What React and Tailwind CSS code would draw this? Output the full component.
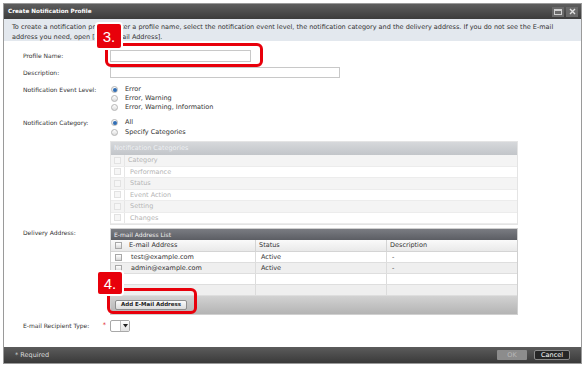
import React from 'react'

function Radio({ checked }) {
  return (
    <span className="relative inline-flex items-center justify-center w-[7px] h-[7px] rounded-full border border-[#b5b5b5] bg-gradient-to-b from-white to-[#dcdcdc] shrink-0">
      {checked && <span className="w-[4px] h-[4px] rounded-full bg-[#2f6db5]" />}
    </span>
  )
}

function Check({ faded }) {
  return (
    <span className={`inline-block w-[7px] h-[7px] border shrink-0 ${faded ? 'border-[#e2e2e2] bg-[#f6f6f6]' : 'border-[#a8a8a8] bg-gradient-to-b from-white to-[#d8d8d8]'}`} />
  )
}

function Label({ children, className = '' }) {
  return <div className={`w-[87px] shrink-0 text-[#333] text-[6px] ${className}`}>{children}</div>
}

const categories = ['Performance', 'Status', 'Event Action', 'Setting', 'Changes']

const emails = [
  { addr: 'test@example.com', status: 'Active', desc: '-' },
  { addr: 'admin@example.com', status: 'Active', desc: '-' },
  { addr: '', status: '', desc: '' },
  { addr: '', status: '', desc: '' },
]

export default function App() {
  return (
    <div className="w-[585px] h-[367px] bg-white p-[3px] relative font-['DejaVu_Sans',sans-serif] text-[6.5px] leading-none">
      <div className="h-full flex flex-col border border-[#9a9a9a]">
        {/* title bar */}
        <div className="h-[15px] shrink-0 flex items-center justify-between pl-[4px] pr-[3px] bg-gradient-to-b from-[#5e5e5e] to-[#3c3c3c]">
          <span className="text-white font-bold text-[5.7px]">Create Notification Profile</span>
          <div className="flex gap-[2px]">
            <span className="w-[12px] h-[10px] bg-[#6a6a6a] flex items-center justify-center">
              <span className="w-[8px] h-[6px] border border-[#cfcfcf] border-t-2" />
            </span>
            <span className="w-[12px] h-[10px] bg-[#6a6a6a] flex items-center justify-center">
              <svg width="7" height="7" viewBox="0 0 7 7">
                <path d="M1 1L6 6M6 1L1 6" stroke="#e0e0e0" strokeWidth="1.4" />
              </svg>
            </span>
          </div>
        </div>

        {/* info bar */}
        <div className="h-[22px] shrink-0 bg-[#e3e8ee] pl-[8px] pt-[3px] text-[#333] whitespace-nowrap leading-[10px]">
          To create a notification profile, enter a profile name, select the notification event level, the notification category and the delivery address. If you do not see the E-mail
          <br />
          address you need, open [Add E-mail Address].
        </div>

        {/* body */}
        <div className="flex-1 pl-[19px] pt-[9px]">
          <div className="flex items-center h-[12px]">
            <Label>Profile Name:</Label>
            <div className="w-[141px] h-[12px] border border-[#c8c8c8] bg-white" />
          </div>

          <div className="flex items-center h-[11px] mt-[5px]">
            <Label>Description:</Label>
            <div className="w-[230px] h-[11px] border border-[#c8c8c8] bg-white" />
          </div>

          <div className="flex mt-[7px]">
            <Label className="pt-[2px]">Notification Event Level:</Label>
            <div className="flex flex-col pl-[1px]">
              {['Error', 'Error, Warning', 'Error, Warning, Information'].map((t, i) => (
                <div key={t} className="flex items-center gap-[7px] h-[9px] text-[#333]">
                  <Radio checked={i === 0} />
                  <span>{t}</span>
                </div>
              ))}
            </div>
          </div>

          <div className="flex mt-[6px]">
            <Label className="pt-[2px]">Notification Category:</Label>
            <div className="flex flex-col pl-[1px]">
              <div className="flex items-center gap-[7px] h-[9px] text-[#333]">
                <Radio checked />
                <span>All</span>
              </div>
              <div className="flex items-center gap-[7px] h-[10px] text-[#333]">
                <Radio />
                <span>Specify Categories</span>
              </div>
            </div>
          </div>

          {/* categories panel */}
          <div className="flex mt-[4px]">
            <Label />
            <div className="w-[408px] border border-[#e4e4e4]">
              <div className="h-[13px] flex items-center pl-[3px] bg-gradient-to-b from-[#d6d8db] to-[#c2c5c9] text-[#eef0f3]">
                Notification Categories
              </div>
              {['Category', ...categories].map((c, i) => (
                <div key={c} className={`h-[11.5px] flex border-b border-[#ececec] text-[#b4b4b4] ${i % 2 === 0 ? 'bg-[#f4f4f4]' : 'bg-white'}`}>
                  <div className="w-[14px] flex items-center justify-center border-r border-[#e6e6e6]">
                    <Check faded />
                  </div>
                  <div className={`flex items-center ${i === 0 ? 'pl-[3px]' : 'pl-[5px]'}`}>{c}</div>
                </div>
              ))}
            </div>
          </div>

          {/* email list */}
          <div className="flex mt-[3px]">
            <Label className="pt-[2px]">Delivery Address:</Label>
            <div className="w-[408px] border border-[#d0d0d0]">
              <div className="h-[11px] flex items-center pl-[3px] bg-gradient-to-b from-[#7a7c82] to-[#5c5e64] text-[#f2f2f2] text-[6px]">
                E-mail Address List
              </div>
              <div className="h-[12px] flex bg-gradient-to-b from-[#fafafa] to-[#e9e9e9] border-b border-[#d4d4d4] text-[#333]">
                <div className="w-[14px] flex items-center justify-center"><Check /></div>
                <div className="w-[131px] flex items-center pl-[4px] border-r border-[#d4d4d4]">E-mail Address</div>
                <div className="w-[131px] flex items-center pl-[3px] border-r border-[#d4d4d4]">Status</div>
                <div className="flex-1 flex items-center pl-[3px]">Description</div>
              </div>
              {emails.map((e, i) => (
                <div key={i} className={`h-[11px] flex border-b border-[#dedede] text-[#333] ${i % 2 === 0 ? 'bg-white' : 'bg-[#efefef]'}`}>
                  <div className="w-[14px] flex items-center justify-center">{e.addr && <Check />}</div>
                  <div className="w-[131px] flex items-center pl-[6px] border-r border-[#dcdcdc]">{e.addr}</div>
                  <div className="w-[131px] flex items-center pl-[5px] border-r border-[#dcdcdc]">{e.status}</div>
                  <div className="flex-1 flex items-center pl-[5px]">{e.desc}</div>
                </div>
              ))}
              <div className="h-[18px] flex items-center pl-[4px] bg-gradient-to-b from-[#d2d2d2] to-[#b4b4b4]">
                <button className="h-[10px] px-[5px] rounded-[2px] border border-[#8e8e8e] bg-gradient-to-b from-[#fbfbfb] to-[#dcdcdc] text-[#222] font-bold text-[5.5px] leading-none">
                  Add E-Mail Address
                </button>
              </div>
            </div>
          </div>

          <div className="flex items-center mt-[5px] h-[12px]">
            <Label className="relative">
              E-mail Recipient Type:
              <span className="absolute right-[4px] top-[-1px] text-[#d11] text-[6.5px]">*</span>
            </Label>
            <div className="w-[20px] h-[12px] flex border border-[#a8a8a8] rounded-[2px] bg-white">
              <div className="flex-1" />
              <div className="w-[9px] flex items-center justify-center border-l border-[#c0c0c0] bg-gradient-to-b from-white to-[#e2e2e2]">
                <svg width="5" height="4" viewBox="0 0 5 4"><path d="M0 0H5L2.5 3.5Z" fill="#222" /></svg>
              </div>
            </div>
          </div>
        </div>

        {/* footer */}
        <div className="h-[16px] shrink-0 flex items-center justify-between pl-[11px] pr-[11px] bg-gradient-to-b from-[#5c5c5c] to-[#3a3a3a]">
          <span className="text-[#dcdcdc]">* Required</span>
          <div className="flex gap-[7px]">
            <span className="w-[30px] h-[10px] flex items-center justify-center bg-[#8c8c8c] text-[#b8b8b8] rounded-[1px]">OK</span>
            <span className="w-[36px] h-[10px] flex items-center justify-center bg-[#262626] border border-[#8a8a8a] text-white rounded-[2px]">Cancel</span>
          </div>
        </div>
      </div>

      {/* callouts */}
      <div className="absolute left-[105px] top-[43px] w-[158px] h-[24px] border-[3px] border-[#e8000b] rounded-[6px]" />
      <div className="absolute left-[95px] top-[22px] w-[28px] h-[28px] border-2 border-white rounded-[4px] bg-[#e8000b] flex items-center justify-center">
        <span className="text-white text-[15px] font-['Liberation_Sans',sans-serif] leading-none">3.</span>
      </div>
      <div className="absolute left-[107px] top-[288px] w-[90px] h-[26px] border-[3px] border-[#e8000b] rounded-[6px]" />
      <div className="absolute left-[96px] top-[270px] w-[28px] h-[26px] border-2 border-white rounded-[4px] bg-[#e8000b] flex items-center justify-center">
        <span className="text-white text-[15px] font-['Liberation_Sans',sans-serif] leading-none">4.</span>
      </div>
    </div>
  )
}
